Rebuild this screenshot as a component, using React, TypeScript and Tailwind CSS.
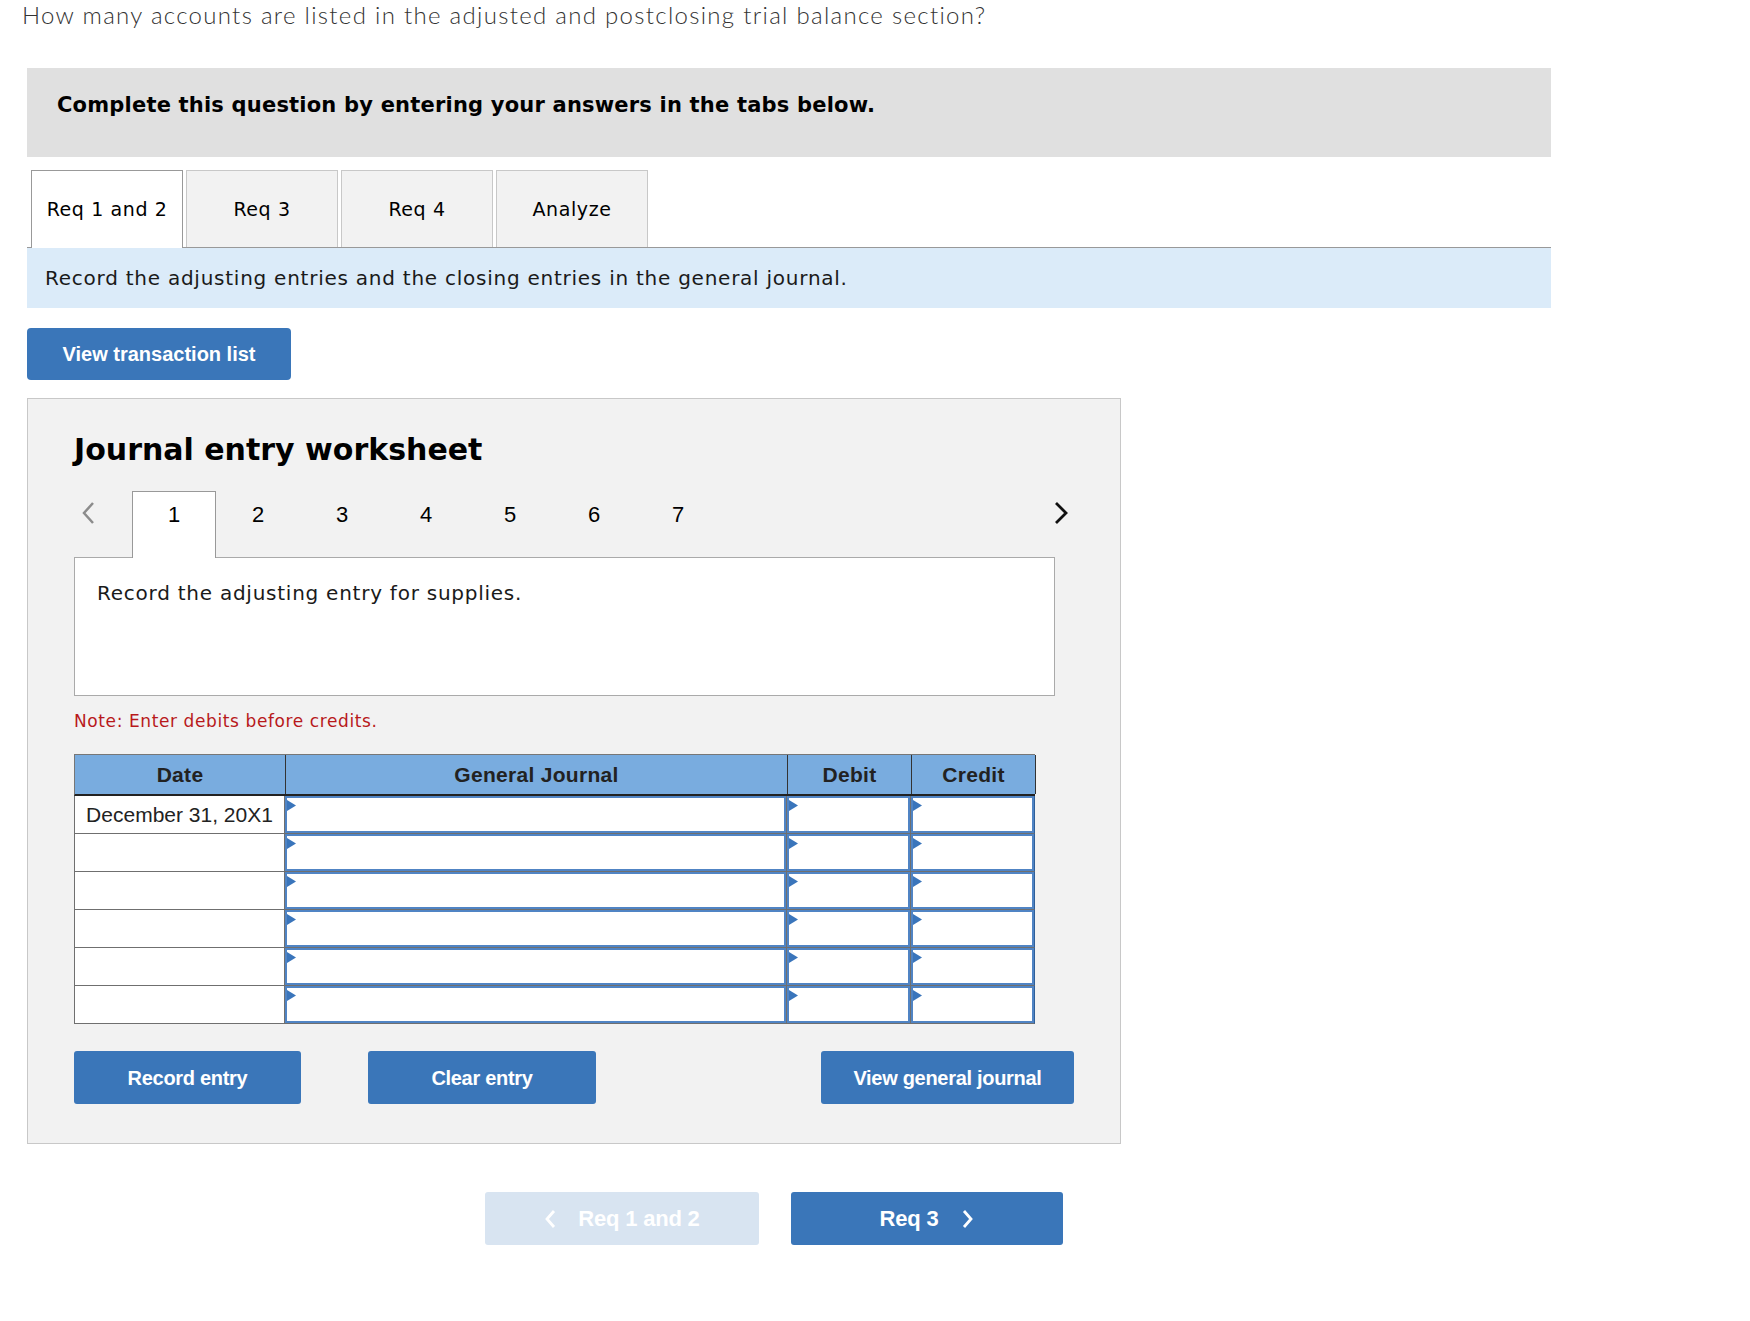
import React from "react";

const sans = { fontFamily: '"DejaVu Sans", Verdana, sans-serif' };
const arial = { fontFamily: '"Liberation Sans", Arial, sans-serif' };

function Tri() {
  return (
    <svg className="absolute left-0 top-[2px]" width="9" height="11" viewBox="0 0 9 11">
      <polygon points="0,0 9,5.5 0,11" fill="#3a75bb" />
    </svg>
  );
}

function InputCell({ last }: { last?: boolean }) {
  return (
    <div className={`h-full border-b border-r border-[#6f6f6f] ${last ? "border-r-[#2f5f99]" : ""}`}>
      <div className="relative h-full border-2 border-[#5084c4] bg-white">
        <Tri />
      </div>
    </div>
  );
}

export default function App() {
  const rows = [0, 1, 2, 3, 4, 5];
  return (
    <div className="w-[1750px] min-h-[1321px] bg-white text-[#1a1a1a]">
      <p
        className="pl-[22px] pt-0 text-[24px] leading-[30px] font-light tracking-[1.3px] text-[#333]"
        style={{ fontFamily: 'Lato, "Open Sans", sans-serif' }}
      >
        How many accounts are listed in the adjusted and postclosing trial balance section?
      </p>

      <div className="ml-[27px] mt-[38px] h-[89px] w-[1524px] bg-[#e0e0e0] pl-[30px] pt-[23px]">
        <span className="text-[21px] leading-[28px] font-bold tracking-[0.2px] text-black" style={sans}>
          Complete this question by entering your answers in the tabs below.
        </span>
      </div>

      <div className="ml-[27px] mt-[13px] w-[1524px] border-b border-[#999]">
        <div className="flex gap-[3px] pl-[4px]">
          {["Req 1 and 2", "Req 3", "Req 4", "Analyze"].map((t, i) => (
            <div
              key={t}
              className={
                i === 0
                  ? "-mb-px flex h-[78px] w-[152px] items-center justify-center border border-b-0 border-[#999] bg-white text-[19px] tracking-[0.6px] text-black"
                  : "flex h-[77px] w-[152px] items-center justify-center border border-b-0 border-[#c8c8c8] bg-[#f2f2f2] text-[19px] tracking-[0.6px] text-black"
              }
              style={sans}
            >
              {t}
            </div>
          ))}
        </div>
      </div>

      <div className="ml-[27px] flex h-[60px] w-[1524px] items-center bg-[#dbebf9] pl-[18px]">
        <span className="text-[20px] tracking-[0.75px] text-[#1a1a1a]" style={sans}>
          Record the adjusting entries and the closing entries in the general journal.
        </span>
      </div>

      <button
        className="ml-[27px] mt-[20px] flex h-[52px] w-[264px] items-center justify-center rounded-[4px] bg-[#3a76b9] text-[20px] font-bold text-white"
        style={arial}
      >
        View transaction list
      </button>

      <div className="ml-[27px] mt-[18px] w-[1094px] border border-[#c8c8c8] bg-[#f2f2f2] pb-[39px] pl-[46px] pt-[33px]">
        <h2 className="text-[30px] font-bold leading-[36px] text-black" style={sans}>
          Journal entry worksheet
        </h2>

        <div className="mt-[23px] flex h-[66px] w-[981px] items-stretch">
          <div className="flex w-[58px] items-start pl-[7px] pt-[10px]">
            <svg width="14" height="24" viewBox="0 0 14 24">
              <polyline points="12,2 3,12 12,22" fill="none" stroke="#8c8c8c" strokeWidth="2.5" />
            </svg>
          </div>
          {[1, 2, 3, 4, 5, 6, 7].map((n) => (
            <div
              key={n}
              className={
                n === 1
                  ? "relative z-10 -mb-px flex w-[84px] items-start justify-center border border-b-0 border-[#999] bg-white pt-[6px] text-[22px] text-black"
                  : "flex w-[84px] items-start justify-center pt-[7px] text-[22px] text-black"
              }
              style={arial}
            >
              {n}
            </div>
          ))}
          <div className="flex flex-1 items-start justify-end pt-[9px]">
            <svg className="-mr-[14px]" width="16" height="26" viewBox="0 0 16 26">
              <polyline points="3,3 13,13 3,23" fill="none" stroke="#111" strokeWidth="2.8" />
            </svg>
          </div>
        </div>

        <div className="h-[139px] w-[981px] border border-[#aaa] bg-white pl-[22px] pt-[23px]">
          <p className="text-[20px] leading-[24px] tracking-[0.75px] text-[#1a1a1a]" style={sans}>
            Record the adjusting entry for supplies.
          </p>
        </div>

        <p className="mt-[13px] text-[17px] leading-[24px] tracking-[0.6px] text-[#b8191b]" style={sans}>
          Note: Enter debits before credits.
        </p>

        <div className="mt-[21px] w-[961px]">
          <div
            className="grid h-[42px] grid-cols-[211px_502px_124px_124px] border-b-2 border-t border-l border-b-[#222] border-t-[#777] border-l-[#777] bg-[#79acdf] text-[21px] font-bold tracking-[0.3px] text-[#222]"
            style={arial}
          >
            <div className="flex items-center justify-center border-r border-[#333]">Date</div>
            <div className="flex items-center justify-center border-r border-[#333]">General Journal</div>
            <div className="flex items-center justify-center border-r border-[#333]">Debit</div>
            <div className="flex items-center justify-center border-r border-[#333]">Credit</div>
          </div>
          {rows.map((r) => (
            <div key={r} className="grid h-[38px] grid-cols-[211px_502px_124px_124px]">
              <div
                className="flex items-center justify-center border-b border-l border-r border-[#6f6f6f] bg-white text-[21px] text-[#222]"
                style={arial}
              >
                {r === 0 ? "December 31, 20X1" : ""}
              </div>
              <InputCell />
              <InputCell />
              <InputCell last />
            </div>
          ))}
        </div>

        <div className="mt-[27px] flex w-[1000px] items-center">
          <button
            className="flex h-[53px] w-[227px] items-center justify-center rounded-[3px] bg-[#3a76b9] text-[20px] font-bold tracking-[-0.3px] text-white"
            style={arial}
          >
            Record entry
          </button>
          <button
            className="ml-[67px] flex h-[53px] w-[228px] items-center justify-center rounded-[3px] bg-[#3a76b9] text-[20px] font-bold tracking-[-0.3px] text-white"
            style={arial}
          >
            Clear entry
          </button>
          <button
            className="ml-[225px] flex h-[53px] w-[253px] items-center justify-center rounded-[3px] bg-[#3a76b9] text-[20px] font-bold tracking-[-0.3px] text-white"
            style={arial}
          >
            View general journal
          </button>
        </div>
      </div>

      <div className="mt-[48px] flex pl-[485px]">
        <button
          className="flex h-[53px] w-[274px] items-center justify-center gap-[22px] rounded-[3px] bg-[#d8e4f1] text-[22px] font-bold tracking-[-0.2px] text-white"
          style={arial}
        >
          <svg width="12" height="20" viewBox="0 0 12 20">
            <polyline points="10,2 3,10 10,18" fill="none" stroke="#fff" strokeWidth="2.8" />
          </svg>
          Req 1 and 2
        </button>
        <button
          className="ml-[32px] flex h-[53px] w-[272px] items-center justify-center gap-[24px] rounded-[3px] bg-[#3a76b9] text-[22px] font-bold tracking-[-0.2px] text-white"
          style={arial}
        >
          Req 3
          <svg width="12" height="20" viewBox="0 0 12 20">
            <polyline points="2,2 9,10 2,18" fill="none" stroke="#fff" strokeWidth="2.8" />
          </svg>
        </button>
      </div>
    </div>
  );
}
